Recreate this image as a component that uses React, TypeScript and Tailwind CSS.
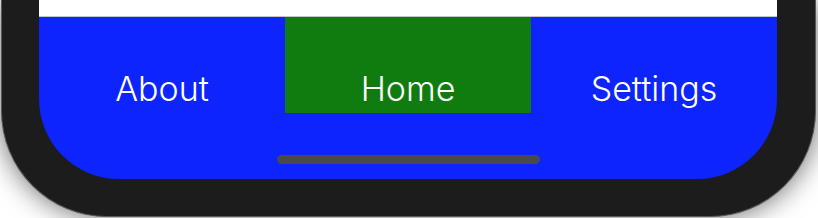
export default function App() {
  const tabs = ["About", "Home", "Settings"];
  return (
    <div className="w-[818px] h-[218px] bg-white overflow-hidden" style={{ fontFamily: "Inter, 'Noto Sans', sans-serif" }}>
      <div className="ml-[1px] w-[815px] h-[217px] flex flex-col bg-[#1c1c1c] border-x border-b border-[#5a5a5a] rounded-b-[106px] shadow-[0_0_28px_rgba(0,0,0,0.6)] pl-[37px] pr-[38px] pb-[37px]">
        <div className="flex-1 flex flex-col rounded-b-[80px] overflow-hidden">
          <div className="h-[16px] bg-white border-b border-[#c4c4c8] box-content" />
          <div className="flex-1 flex flex-col bg-[#0d24fc]">
            <div className="flex h-[96px]">
              {tabs.map((t) => (
                <div
                  key={t}
                  className={`flex-1 flex items-end justify-center pb-[4px] text-[34px] leading-[41px] font-light text-white ${t === "Home" ? "bg-[#107c10]" : ""}`}
                >
                  {t}
                </div>
              ))}
            </div>
            <div className="flex-1 flex justify-center pt-[42px]">
              <div className="w-[263px] h-[9px] rounded-full bg-[#4a4a4a]" />
            </div>
          </div>
        </div>
      </div>
    </div>
  );
}
